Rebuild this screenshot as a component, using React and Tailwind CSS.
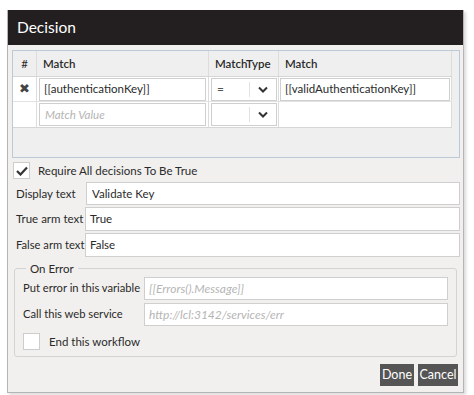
import React from "react";

const font = { fontFamily: "Lato, 'Noto Sans', sans-serif" };

function Chevron() {
  return (
    <svg width="10" height="7" viewBox="0 0 10 7">
      <path d="M1 1.5 L5 5.5 L9 1.5" stroke="#333" strokeWidth="2" fill="none" />
    </svg>
  );
}

function SelectBox({ value }) {
  return (
    <div className="flex h-[23px] w-[66px] items-center border border-[#cfcfcf] bg-white">
      <div className="flex-1 pl-[5px] text-[12px] text-[#555]">{value}</div>
      <div className="h-[15px] w-px bg-[#e2e2e2]" />
      <div className="flex w-[26px] justify-center">
        <Chevron />
      </div>
    </div>
  );
}

function Checkbox({ checked }) {
  return (
    <div className="flex h-[17px] w-[17px] items-center justify-center border border-[#cdcdcd] bg-white">
      {checked && (
        <svg width="12" height="10" viewBox="0 0 12 10">
          <path d="M1 5 L4.5 8.5 L11 1.5" stroke="#333" strokeWidth="2.2" fill="none" />
        </svg>
      )}
    </div>
  );
}

export default function App() {
  return (
    <div className="h-[395px] w-[474px] bg-white pl-[7px] pt-[10px] text-[11.5px] text-[#2a2a2a]" style={font}>
      <div className="flex h-[383px] w-[457px] flex-col border-x border-b border-[#b5b5b5] bg-[#f1f0ee] shadow-[2px_2px_3px_rgba(0,0,0,0.15)]">
        <div className="flex h-[35px] items-center bg-[#231f20] pl-[9px] text-[15.5px] text-white">Decision</div>

        {/* table */}
        <div className="ml-[4px] mt-[5px] flex h-[108px] w-[448px] border border-[#bccad8] bg-[#efefef]">
          <div className="flex w-[439px] flex-col">
            <div className="flex h-[26px] border-b border-[#d6d6d6] text-[11.5px] font-semibold">
              <div className="flex w-[24px] items-center justify-center border-r border-[#dcdcdc] font-normal">#</div>
              <div className="flex w-[172px] items-center border-r border-[#dcdcdc] pl-[6px]">Match</div>
              <div className="flex w-[70px] items-center border-r border-[#dcdcdc] pl-[6px]">MatchType</div>
              <div className="flex flex-1 items-center border-r border-[#dcdcdc] pl-[6px]">Match</div>
            </div>
            <div className="flex h-[25px] border-b border-[#e2e2e2] bg-white">
              <div className="flex w-[24px] items-center justify-center border-r border-[#dcdcdc] text-[13px] text-[#444]">✖</div>
              <div className="flex w-[172px] items-center border-r border-[#dcdcdc] px-[2px]">
                <div className="flex h-[23px] w-full items-center border border-[#cfcfcf] pl-[4px]">[[authenticationKey]]</div>
              </div>
              <div className="flex w-[70px] items-center border-r border-[#dcdcdc] pl-[2px]">
                <SelectBox value="=" />
              </div>
              <div className="flex flex-1 items-center border-r border-[#dcdcdc] px-[1px]">
                <div className="flex h-[23px] w-full items-center border border-[#cfcfcf] pl-[4px]">[[validAuthenticationKey]]</div>
              </div>
            </div>
            <div className="flex h-[26px] border-b border-[#d6d6d6] bg-white">
              <div className="w-[24px] border-r border-[#dcdcdc]" />
              <div className="flex w-[172px] items-center border-r border-[#dcdcdc] px-[2px]">
                <div className="flex h-[23px] w-full items-center border border-[#cfcfcf] pl-[5px] text-[11.5px] italic text-[#b5b5b5]">Match Value</div>
              </div>
              <div className="flex w-[70px] items-center border-r border-[#dcdcdc] pl-[2px]">
                <SelectBox value="" />
              </div>
              <div className="flex-1 border-r border-[#dcdcdc]" />
            </div>
          </div>
        </div>

        {/* require checkbox */}
        <div className="ml-[5px] mt-[4px] flex h-[17px] items-center gap-[8px] whitespace-nowrap">
          <Checkbox checked />
          <span>Require All decisions To Be True</span>
        </div>

        <div className="ml-[8px] mt-[3px] flex flex-col gap-[2px] whitespace-nowrap">
          <div className="flex h-[23px] items-center">
            <div className="w-[70px]">Display text</div>
            <div className="flex h-[23px] w-[374px] items-center border border-[#cfcfcf] bg-white pl-[5px]">Validate Key</div>
          </div>
          <div className="flex h-[24px] items-center">
            <div className="w-[69px]">True arm text</div>
            <div className="flex h-[24px] w-[375px] items-center border border-[#cfcfcf] bg-white pl-[4px]">True</div>
          </div>
          <div className="flex h-[24px] items-center">
            <div className="w-[69px] text-[11.2px]">False arm text</div>
            <div className="flex h-[24px] w-[375px] items-center border border-[#cfcfcf] bg-white pl-[4px]">False</div>
          </div>
        </div>

        {/* fieldset */}
        <fieldset className="ml-[6px] mt-[3px] h-[97px] w-[443px] rounded-[3px] border border-[#d3d3d3] px-[8px] pb-[6px]">
          <legend className="ml-[3px] px-[4px]">On Error</legend>
          <div className="flex flex-col gap-[3px] whitespace-nowrap">
            <div className="flex h-[23px] items-center">
              <div className="w-[121px] text-[11.2px]">Put error in this variable</div>
              <div className="flex h-[23px] flex-1 items-center border border-[#cfcfcf] bg-white pl-[4px] text-[12px] italic text-[#b5b5b5]">[[Errors().Message]]</div>
            </div>
            <div className="flex h-[23px] items-center">
              <div className="w-[121px] text-[11.2px]">Call this web service</div>
              <div className="flex h-[23px] flex-1 items-center border border-[#cfcfcf] bg-white pl-[4px] text-[12px] italic text-[#b5b5b5]">http://lcl:3142/services/err</div>
            </div>
            <div className="mt-[4px] flex items-center gap-[9px]">
              <Checkbox />
              <span>End this workflow</span>
            </div>
          </div>
        </fieldset>

        <div className="mr-[5px] mt-[7px] flex justify-end gap-[4px] text-[12.5px] text-white">
          <div className="flex h-[22px] w-[34px] items-center justify-center bg-[#555555]">Done</div>
          <div className="flex h-[22px] w-[40px] items-center justify-center bg-[#555555]">Cancel</div>
        </div>
      </div>
    </div>
  );
}
